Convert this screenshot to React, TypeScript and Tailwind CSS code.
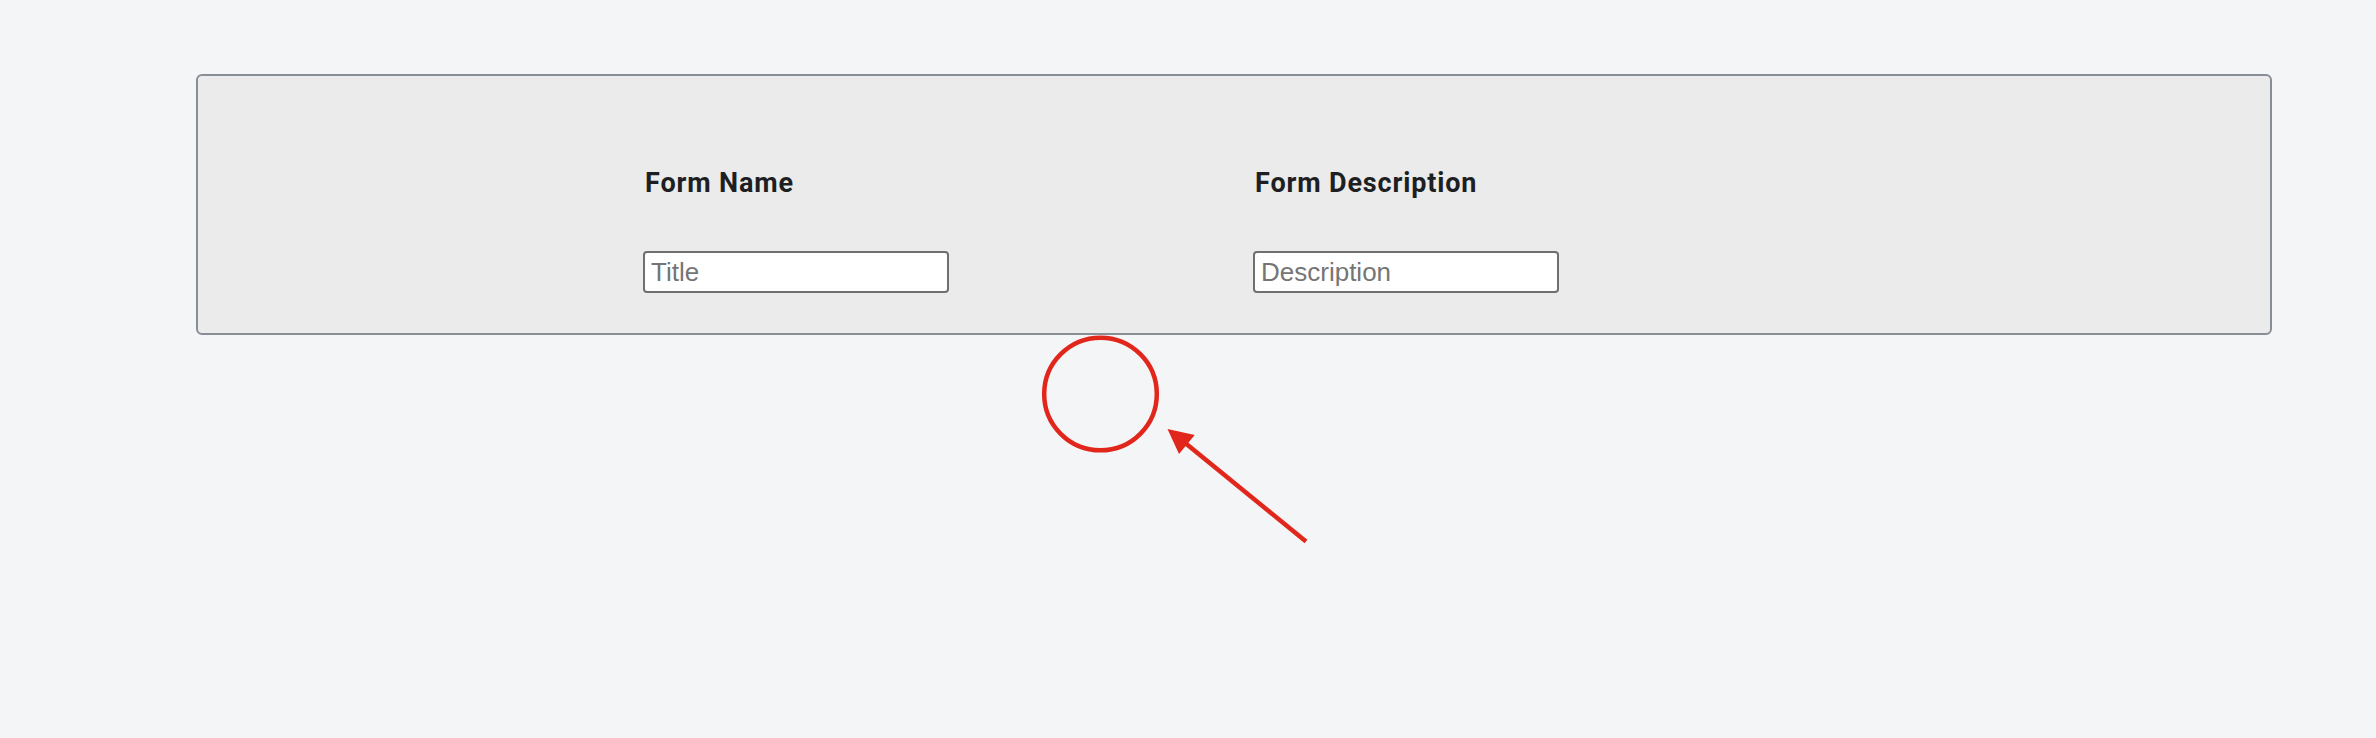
import React from 'react'

function Field({ label, placeholder }: { label: string; placeholder: string }) {
  return (
    <div className="flex w-[610px] flex-col">
      <label className="pl-[2px] font-['Roboto',sans-serif] text-[27px] font-bold leading-[32px] tracking-[0.85px] text-[#1d1f23]">
        {label}
      </label>
      <input
        type="text"
        placeholder={placeholder}
        className="mt-[52px] h-[42px] w-[306px] rounded-[4px] border-2 border-[#6f6f6f] bg-white px-[6px] font-['Liberation_Sans',Arial,sans-serif] text-[26px] text-black outline-none placeholder:text-[#757575]"
      />
    </div>
  )
}

// red annotation drawn over the page
function Annotation() {
  return (
    <svg
      className="pointer-events-none absolute left-0 top-0"
      width="2376"
      height="738"
      viewBox="0 0 2376 738"
    >
      <circle cx="1100.5" cy="394" r="56.3" fill="none" stroke="#e1261b" strokeWidth="4.5" />
      <line x1="1306" y1="541.5" x2="1184" y2="442" stroke="#e1261b" strokeWidth="4.5" />
      <polygon points="1167.5,429 1179,454 1194.7,435" fill="#e1261b" />
    </svg>
  )
}

export default function App() {
  return (
    <div className="relative min-h-[738px] w-full overflow-hidden bg-[#f4f5f7] pl-[196px] pr-[104px] pt-[74px]">
      <div className="flex h-[261px] rounded-[6px] border-2 border-[#878e96] bg-[#ebebeb] pl-[445px] pt-[91px]">
        <Field label="Form Name" placeholder="Title" />
        <Field label="Form Description" placeholder="Description" />
      </div>
      <Annotation />
    </div>
  )
}
